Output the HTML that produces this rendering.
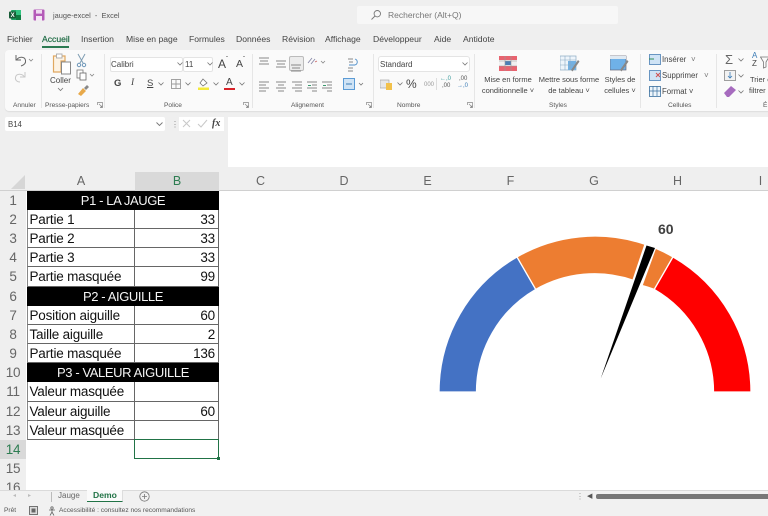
<!DOCTYPE html>
<html lang="fr"><head><meta charset="utf-8"><title>jauge-excel - Excel</title>
<style>
html,body{margin:0;padding:0;width:768px;height:516px;overflow:hidden;background:#fff}
#w{position:relative;width:768px;height:516px;overflow:hidden;font-family:"Liberation Sans",sans-serif;color:#444;filter:blur(.35px)}
#w div,#w span,#w svg{position:absolute}
.t{white-space:nowrap;font-size:8.6px;line-height:11px}
.gl{font-size:6.6px;line-height:9px;color:#555;white-space:nowrap;text-align:center}
.sep{width:1px;background:#e6e6e6;top:54px;height:54px}
.box{background:#fff;border:1px solid #e4e4e4;border-radius:2px;box-sizing:border-box}
.ch{font-size:12.5px;line-height:19px;height:19px;color:#666;text-align:center;top:172px}
.rh{left:0;width:26px;height:19px;text-align:center;font-size:13.5px;line-height:20px;letter-spacing:-.2px;color:#666;background:#efefef}
.c{font-size:13.5px;letter-spacing:-.2px;line-height:19px;height:19.2px;box-sizing:border-box;color:#111;white-space:nowrap}
.a{left:27px;width:108px;padding-left:1.500px;border-bottom:1px solid #666;border-right:1px solid #666;border-left:1px solid #888}
.b{left:135px;width:84px;text-align:right;padding-right:3px;border-bottom:1px solid #666;border-right:1px solid #666}
.h{left:27px;width:192px;background:#000;color:#f4f4f4;text-align:center;font-size:13px;letter-spacing:-.4px}
.l{font-size:7.500px}
</style></head><body><div id="w">

<!-- chrome background -->
<div style="left:0;top:0;width:768px;height:172px;background:#efefef"></div>

<!-- title bar -->
<svg style="left:9px;top:9px" width="12" height="12" viewBox="0 0 12 12"><rect x="2" y="1" width="10" height="10" rx="1" fill="#21a366"/><rect x="7" y="1" width="5" height="5" fill="#33c481"/><rect x="7" y="6" width="5" height="5" fill="#107c41"/><rect x="0" y="2.500" width="7" height="7" rx="1" fill="#185c37"/><text x="1.600" y="8" font-size="6" font-weight="bold" fill="#fff" font-family="Liberation Sans">X</text></svg>
<svg style="left:33px;top:9px" width="12" height="12" viewBox="0 0 12 12"><rect x=".5" y=".5" width="11" height="11" rx="1" fill="#b45ab8"/><rect x="3" y="1" width="6" height="3.600" fill="#efd9f0"/><rect x="3" y="7" width="6" height="4.500" fill="#f4e6f5"/></svg>
<span class="t" style="left:53px;top:10px;font-size:7.400px;color:#555">jauge-excel &nbsp;-&nbsp; Excel</span>
<div style="left:357px;top:6px;width:261px;height:18px;background:#f7f7f7;border-radius:2px"></div>
<svg style="left:370px;top:9px" width="12" height="12" viewBox="0 0 12 12" fill="none" stroke="#777" stroke-width=".9"><circle cx="7.300" cy="4.700" r="3.200"/><path d="M5 7L1.500 10.500"/></svg>
<span class="t" style="left:388px;top:10px;font-size:8.500px;color:#777">Rechercher (Alt+Q)</span>

<!-- menu tabs -->
<span class="t" style="left:7px;top:34px">Fichier</span>
<span class="t" style="left:42px;top:34px;color:#1e6b44;-webkit-text-stroke:.2px #1e6b44">Accueil</span>
<div style="left:42px;top:46px;width:27px;height:2px;background:#2b7a52"></div>
<span class="t" style="left:81px;top:34px">Insertion</span>
<span class="t" style="left:126px;top:34px">Mise en page</span>
<span class="t" style="left:189px;top:34px">Formules</span>
<span class="t" style="left:236px;top:34px">Données</span>
<span class="t" style="left:282px;top:34px">Révision</span>
<span class="t" style="left:325px;top:34px">Affichage</span>
<span class="t" style="left:373px;top:34px">Développeur</span>
<span class="t" style="left:434px;top:34px">Aide</span>
<span class="t" style="left:463px;top:34px">Antidote</span>

<!-- ribbon panel -->
<div style="left:5px;top:50px;width:780px;height:61px;background:#fafafa;border-radius:4px;box-shadow:0 1px 1px #ddd"></div>
<div class="sep" style="left:41px"></div><div class="sep" style="left:104px"></div><div class="sep" style="left:252px"></div><div class="sep" style="left:373px"></div><div class="sep" style="left:474px"></div><div class="sep" style="left:640px"></div><div class="sep" style="left:716px"></div>

<!-- undo / redo -->
<svg style="left:13px;top:52px" width="26" height="32" viewBox="0 0 26 32" fill="none"><path d="M3 3v5h5M3.500 8C6 4 12 4.500 12.500 8.500C13 11 11 13 8 14" stroke="#666" stroke-width="1"/><path d="M16 7l2 2 2-2" stroke="#888" stroke-width=".8"/><path d="M12 20v5h-5M11.500 25C9 21 3 21.500 2.500 25.500C2 28 4 30 7 30" stroke="#c8c8c8" stroke-width="1"/></svg>
<span class="gl" style="left:13px;top:101px">Annuler</span>

<!-- clipboard -->
<svg style="left:50px;top:52px" width="24" height="24" viewBox="0 0 24 24" fill="none"><path d="M3.500 4H15V9H11V20H3.500Z" fill="#fdf3e4" stroke="#e0a860" stroke-width="1.200"/><rect x="6.500" y="2" width="5.500" height="4" fill="#fff" stroke="#aaa" stroke-width=".9"/><rect x="11.500" y="10" width="9" height="12" fill="#fff" stroke="#888"/></svg>
<span class="t" style="left:50px;top:75px;font-size:8px">Coller</span>
<svg style="left:57px;top:87px" width="7" height="5" viewBox="0 0 7 5" fill="none" stroke="#777" stroke-width=".8"><path d="M1 1l2.500 2.500L6 1"/></svg>
<svg style="left:76px;top:53px" width="20" height="46" viewBox="0 0 20 46" fill="none"><path d="M2 1L7 10M9 1L4 10" stroke="#7f9db3" stroke-width="1"/><circle cx="3" cy="12" r="1.700" stroke="#6f98ba"/><circle cx="8" cy="12" r="1.700" stroke="#6f98ba"/><rect x="1" y="17" width="6" height="8" fill="#fff" stroke="#777" stroke-width=".8"/><rect x="4" y="20" width="6" height="7" fill="#fff" stroke="#666" stroke-width=".8"/><path d="M14 21l2 2 2-2" stroke="#888" stroke-width=".8"/><path d="M2 41l5-6 3 3-5 5z" fill="#e8a94a"/><path d="M8 35l3-3 2 2-3 3z" fill="#888"/></svg>
<span class="gl" style="left:45px;top:101px">Presse-papiers</span>
<svg style="left:97px;top:102px" width="6" height="6" viewBox="0 0 6 6" fill="none" stroke="#888" stroke-width=".7"><path d="M.5 3V.5H5.500V5.500H3M2 2L5 5M3.500 5H5V3.500"/></svg>

<!-- font -->
<div class="box" style="left:110px;top:57px;width:73px;height:15px"></div>
<span class="t" style="left:111px;top:59px;font-size:8px">Calibri</span>
<svg style="left:177px;top:62px" width="6" height="4" viewBox="0 0 6 4" fill="none" stroke="#777" stroke-width=".8"><path d="M.5.500L3 3 5.500.500"/></svg>
<div class="box" style="left:183px;top:57px;width:30px;height:15px"></div>
<span class="t" style="left:185px;top:59px;font-size:8px">11</span>
<svg style="left:207px;top:62px" width="6" height="4" viewBox="0 0 6 4" fill="none" stroke="#777" stroke-width=".8"><path d="M.5.500L3 3 5.500.500"/></svg>
<span class="t" style="left:218px;top:57px;font-size:12px;line-height:14px">A</span><span class="t" style="left:226px;top:57px;font-size:6px;line-height:7px">ˆ</span>
<span class="t" style="left:236px;top:58px;font-size:10.500px;line-height:13px">A</span><span class="t" style="left:243px;top:57px;font-size:6px;line-height:7px">ˇ</span>
<span class="t" style="left:114px;top:78px;font-size:9.500px;font-weight:bold">G</span>
<span class="t" style="left:131px;top:78px;font-size:9.500px;font-style:italic;font-family:'Liberation Serif',serif">I</span>
<span class="t" style="left:147px;top:78px;font-size:9.500px;text-decoration:underline">S</span>
<svg style="left:158px;top:82px" width="6" height="4" viewBox="0 0 6 4" fill="none" stroke="#777" stroke-width=".8"><path d="M.5.500L3 3 5.500.500"/></svg>
<svg style="left:171px;top:79px" width="10" height="10" viewBox="0 0 10 10" fill="none" stroke="#999" stroke-width=".9"><rect x=".5" y=".5" width="9" height="9"/><path d="M5 .5v9M.5 5h9"/></svg>
<svg style="left:185px;top:82px" width="6" height="4" viewBox="0 0 6 4" fill="none" stroke="#777" stroke-width=".8"><path d="M.5.500L3 3 5.500.500"/></svg>
<svg style="left:198px;top:78px" width="11" height="12" viewBox="0 0 11 12"><path d="M5 1L9 5 5 8 2 5z" fill="#fff" stroke="#777" stroke-width=".8"/><rect x="0" y="9.500" width="11" height="2.500" fill="#f5ea3a"/></svg>
<svg style="left:213px;top:82px" width="6" height="4" viewBox="0 0 6 4" fill="none" stroke="#777" stroke-width=".8"><path d="M.5.500L3 3 5.500.500"/></svg>
<span class="t" style="left:226px;top:77px;font-size:10px">A</span><div style="left:224px;top:88px;width:11px;height:2px;background:#d8232a"></div>
<svg style="left:239px;top:82px" width="6" height="4" viewBox="0 0 6 4" fill="none" stroke="#777" stroke-width=".8"><path d="M.5.500L3 3 5.500.500"/></svg>
<span class="gl" style="left:164px;top:101px">Police</span>
<svg style="left:243px;top:102px" width="6" height="6" viewBox="0 0 6 6" fill="none" stroke="#888" stroke-width=".7"><path d="M.5 3V.5H5.500V5.500H3M2 2L5 5M3.500 5H5V3.500"/></svg>

<!-- alignment -->
<div style="left:289px;top:56px;width:15px;height:15px;background:#ececec;border:1px solid #bbb;border-radius:2px;box-sizing:border-box"></div>
<svg style="left:258px;top:56px" width="60" height="36" viewBox="0 0 60 36" fill="none" stroke="#888" stroke-width=".9"><path d="M1 2h10M2 5h8M1 8h10"/><path d="M18 5h10M19 8h8M18 11h10"/><path d="M33 9h10M34 12h8M33 15h10"/><path d="M1 26h10M1 29h7M1 32h10M1 35h7"/><path d="M18 26h10M20 29h6M18 32h10M20 35h6"/><path d="M34 26h10M37 29h7M34 32h10M37 35h7"/></svg>
<svg style="left:307px;top:56px" width="36" height="36" viewBox="0 0 36 36" fill="none" stroke-width=".9"><path d="M1 7l4-5M4 8l4-5" stroke="#8a8aa8"/><path d="M8 6l2-1" stroke="#c66"/><path d="M14 5l2 2 2-2" stroke="#888" stroke-width=".8"/><path d="M0 26h10M5 29h5M0 32h10M5 35h5M15 26h10M20 29h5M15 32h10M20 35h5" stroke="#888"/><path d="M1 29.500h3M16 29.500h3" stroke="#3a9b6f"/></svg>
<svg style="left:346px;top:58px" width="14" height="14" viewBox="0 0 14 14" fill="none" stroke-width=".9"><path d="M2 1h5M3 4h4" stroke="#888"/><path d="M9 1c3 1 3 5 0 6H3" stroke="#4f8fc9"/><path d="M2 10h5M2 13h5" stroke="#888"/></svg>
<svg style="left:343px;top:78px" width="24" height="12" viewBox="0 0 24 12"><rect x=".5" y=".5" width="11" height="11" fill="#cfe3f5" stroke="#5b9bd5"/><path d="M3 6h6" stroke="#3a7bb5"/><path d="M16 5l2 2 2-2" fill="none" stroke="#777" stroke-width=".8"/></svg>
<span class="gl" style="left:291px;top:101px">Alignement</span>
<svg style="left:366px;top:102px" width="6" height="6" viewBox="0 0 6 6" fill="none" stroke="#888" stroke-width=".7"><path d="M.5 3V.5H5.500V5.500H3M2 2L5 5M3.500 5H5V3.500"/></svg>

<!-- number -->
<div class="box" style="left:378px;top:56px;width:92px;height:16px;border-radius:3px"></div>
<span class="t" style="left:380px;top:59px;font-size:8px">Standard</span>
<svg style="left:462px;top:62px" width="6" height="4" viewBox="0 0 6 4" fill="none" stroke="#777" stroke-width=".8"><path d="M.5.500L3 3 5.500.500"/></svg>
<svg style="left:380px;top:79px" width="12" height="11" viewBox="0 0 12 11"><rect width="9" height="8" y="1" fill="#e8e8e8" stroke="#999" stroke-width=".6"/><rect x="6" y="4" width="6" height="7" fill="#f2c14b"/></svg>
<svg style="left:397px;top:82px" width="6" height="4" viewBox="0 0 6 4" fill="none" stroke="#777" stroke-width=".8"><path d="M.5.500L3 3 5.500.500"/></svg>
<span class="t" style="left:406px;top:77px;font-size:12px;line-height:14px">%</span>
<span class="t" style="left:424px;top:80px;font-size:6px;color:#999">000</span>
<div style="left:436px;top:78px;width:1px;height:12px;background:#ddd"></div>
<span class="t" style="left:440px;top:76px;font-size:6px;line-height:7px;color:#3a9b9b">←,0</span><span class="t" style="left:442px;top:83px;font-size:6px;line-height:7px;color:#555">,00</span>
<span class="t" style="left:459px;top:76px;font-size:6px;line-height:7px;color:#555">,00</span><span class="t" style="left:457px;top:83px;font-size:6px;line-height:7px;color:#3a7bb5">→,0</span>
<span class="gl" style="left:397px;top:101px">Nombre</span>
<svg style="left:467px;top:102px" width="6" height="6" viewBox="0 0 6 6" fill="none" stroke="#888" stroke-width=".7"><path d="M.5 3V.5H5.500V5.500H3M2 2L5 5M3.500 5H5V3.500"/></svg>

<!-- styles -->
<svg style="left:499px;top:56px" width="18" height="15" viewBox="0 0 18 15"><rect width="18" height="15" fill="#f0f0f0"/><rect x="0" y="0" width="18" height="4" fill="#e8636f"/><rect x="0" y="10" width="18" height="5" fill="#e8636f"/><rect x="6" y="5" width="6" height="4" fill="#4a7fb5"/><path d="M6 0v15M12 0v15M0 5h18M0 10h18" stroke="#999" stroke-width=".6"/></svg>
<span class="t l" style="left:474px;top:74px;width:68px;text-align:center">Mise en forme</span>
<span class="t l" style="left:474px;top:85px;width:68px;text-align:center">conditionnelle ˅</span>
<svg style="left:560px;top:55px" width="20" height="18" viewBox="0 0 20 18"><rect y="1" width="16" height="14" fill="#eef5fb" stroke="#8aa9c2" stroke-width=".7"/><rect x="8" y="6" width="8" height="9" fill="#73b1e3"/><path d="M0 5h16M0 10h16M5 1v14M10 1v14" stroke="#8aa9c2" stroke-width=".6"/><path d="M11 15l7-10 1.500 1.500L12.500 16.500z" fill="#888"/></svg>
<span class="t l" style="left:535px;top:74px;width:68px;text-align:center">Mettre sous forme</span>
<span class="t l" style="left:535px;top:85px;width:68px;text-align:center">de tableau ˅</span>
<svg style="left:610px;top:55px" width="20" height="18" viewBox="0 0 20 18"><rect y="1" width="16" height="14" fill="#6fb1e8" stroke="#667" stroke-width=".7"/><rect y="1" width="16" height="3" fill="#dfe9f2"/><path d="M10 15l7-10 1.500 1.500L11.500 16.500z" fill="#888"/></svg>
<span class="t l" style="left:596px;top:74px;width:48px;text-align:center">Styles de</span>
<span class="t l" style="left:596px;top:85px;width:48px;text-align:center">cellules ˅</span>
<span class="gl" style="left:549px;top:101px">Styles</span>

<!-- cells -->
<svg style="left:649px;top:54px" width="12" height="44" viewBox="0 0 12 44"><rect x=".5" y=".5" width="11" height="10" fill="#cfe3f5" stroke="#4a7fb5" stroke-width=".8"/><path d="M0 5h5" stroke="#2e8b57"/><rect x=".5" y="16.500" width="11" height="10" fill="#cfe3f5" stroke="#4a7fb5" stroke-width=".8"/><path d="M7 19l4 4M11 19l-4 4" stroke="#d05050"/><rect x=".5" y="32.500" width="11" height="10" fill="#eef5fb" stroke="#3a6f9f" stroke-width=".8"/><path d="M4 32v10M8 32v10M0 37h12" stroke="#3a6f9f" stroke-width=".7"/></svg>
<span class="t l" style="left:662px;top:54px;font-size:7.800px">Insérer</span><span class="t" style="left:691px;top:54px;font-size:8px;color:#777">˅</span>
<span class="t l" style="left:662px;top:70px;font-size:7.800px">Supprimer</span><span class="t" style="left:704px;top:70px;font-size:8px;color:#777">˅</span>
<span class="t l" style="left:662px;top:86px;font-size:7.800px">Format ˅</span>
<span class="gl" style="left:668px;top:101px">Cellules</span>

<!-- edit -->
<span class="t" style="left:725px;top:52px;font-size:13px;line-height:15px;color:#666">Σ</span>
<svg style="left:738px;top:58px" width="6" height="4" viewBox="0 0 6 4" fill="none" stroke="#777" stroke-width=".8"><path d="M.5.500L3 3 5.500.500"/></svg>
<svg style="left:724px;top:70px" width="12" height="11" viewBox="0 0 12 11"><rect x=".5" y=".5" width="11" height="10" fill="#f2f2f2" stroke="#888" stroke-width=".8"/><path d="M6 2v6M4 6l2 2 2-2" fill="none" stroke="#3a7bb5" stroke-width=".8"/></svg>
<svg style="left:738px;top:74px" width="6" height="4" viewBox="0 0 6 4" fill="none" stroke="#777" stroke-width=".8"><path d="M.5.500L3 3 5.500.500"/></svg>
<svg style="left:724px;top:86px" width="12" height="11" viewBox="0 0 12 11"><path d="M0 7l7-7 5 4-7 7H3z" fill="#a66bbe"/></svg>
<svg style="left:738px;top:90px" width="6" height="4" viewBox="0 0 6 4" fill="none" stroke="#777" stroke-width=".8"><path d="M.5.500L3 3 5.500.500"/></svg>
<span class="t" style="left:752px;top:52px;font-size:8px;line-height:8px;color:#3a7bb5">A</span><span class="t" style="left:752px;top:60px;font-size:8px;line-height:8px;color:#444">Z</span>
<svg style="left:760px;top:56px" width="10" height="13" viewBox="0 0 10 13" fill="none" stroke="#777" stroke-width=".8"><path d="M.5 1h8.500L6 6v5L3.500 12V6z"/></svg>
<span class="t l" style="left:750px;top:74px">Trier e</span>
<span class="t l" style="left:749px;top:85px">filtrer</span>
<span class="gl" style="left:763px;top:101px">É</span>

<!-- formula bar -->
<div style="left:5px;top:117px;width:160px;height:14px;background:#fff;border-radius:2px"></div>
<span class="t" style="left:8px;top:119px;font-size:7.800px">B14</span>
<svg style="left:156px;top:122px" width="7" height="5" viewBox="0 0 7 5" fill="none" stroke="#777" stroke-width=".9"><path d="M.5.500L3.500 3.500 6.500.500"/></svg>
<span class="t" style="left:171px;top:119px;font-size:8px;color:#888">⋮</span>
<div style="left:179px;top:117px;width:45px;height:14px;background:#fff"></div>
<svg style="left:182px;top:119px" width="26" height="10" viewBox="0 0 26 10" fill="none" stroke="#c8c8c8" stroke-width="1"><path d="M1 1l7 7M8 1L1 8M16 5l3 3 6-7"/></svg>
<span class="t" style="left:212px;top:118px;font-size:10px;font-style:italic;font-family:'Liberation Serif',serif;color:#444"><b>fx</b></span>
<div style="left:228px;top:117px;width:540px;height:50px;background:#fff"></div>

<!-- column headers -->
<div style="left:0;top:172px;width:768px;height:19px;background:#efefef;border-bottom:1px solid #d0d0d0;box-sizing:border-box"></div>
<svg style="left:10px;top:174px" width="16" height="16" viewBox="0 0 16 16"><path d="M15 1V15H1Z" fill="#d6d6d6"/></svg>
<div class="ch" style="left:27px;width:108px">A</div>
<div class="ch" style="left:135px;width:84px;background:#d9d9d9;color:#2e7d52">B</div>
<div class="ch" style="left:219px;width:83px">C</div>
<div class="ch" style="left:302px;width:84px">D</div>
<div class="ch" style="left:386px;width:83px">E</div>
<div class="ch" style="left:469px;width:83px">F</div>
<div class="ch" style="left:552px;width:84px">G</div>
<div class="ch" style="left:636px;width:83px">H</div>
<div class="ch" style="left:719px;width:83px">I</div>

<!-- row headers -->
<div style="left:0;top:191px;width:26px;height:299px;background:#efefef"></div>
<div class="rh" style="top:191px">1</div><div class="rh" style="top:210px">2</div><div class="rh" style="top:229px">3</div><div class="rh" style="top:248px">4</div><div class="rh" style="top:267px">5</div><div class="rh" style="top:287px">6</div><div class="rh" style="top:306px">7</div><div class="rh" style="top:325px">8</div><div class="rh" style="top:344px">9</div><div class="rh" style="top:363px">10</div><div class="rh" style="top:382px">11</div><div class="rh" style="top:402px">12</div><div class="rh" style="top:421px">13</div>
<div class="rh" style="top:440px;background:#d9d9d9;color:#2e7d52">14</div><div class="rh" style="top:459px">15</div><div class="rh" style="top:478px;height:12px;overflow:hidden">16</div>

<!-- cells -->
<div class="c h" style="top:191px">P1 - LA JAUGE</div>
<div class="c a" style="top:210px">Partie 1</div><div class="c b" style="top:210px">33</div>
<div class="c a" style="top:229px">Partie 2</div><div class="c b" style="top:229px">33</div>
<div class="c a" style="top:248px">Partie 3</div><div class="c b" style="top:248px">33</div>
<div class="c a" style="top:267px;height:20px">Partie masquée</div><div class="c b" style="top:267px;height:20px">99</div>
<div class="c h" style="top:287px">P2 - AIGUILLE</div>
<div class="c a" style="top:306px">Position aiguille</div><div class="c b" style="top:306px">60</div>
<div class="c a" style="top:325px">Taille aiguille</div><div class="c b" style="top:325px">2</div>
<div class="c a" style="top:344px">Partie masquée</div><div class="c b" style="top:344px">136</div>
<div class="c h" style="top:363px">P3 - VALEUR AIGUILLE</div>
<div class="c a" style="top:382px;height:20px">Valeur masquée</div><div class="c b" style="top:382px;height:20px"></div>
<div class="c a" style="top:402px">Valeur aiguille</div><div class="c b" style="top:402px">60</div>
<div class="c a" style="top:421px">Valeur masquée</div><div class="c b" style="top:421px"></div>
<div style="left:134px;top:439px;width:85px;height:20px;border:1.500px solid #217346;box-sizing:border-box"></div>
<div style="left:217px;top:457px;width:3px;height:3px;background:#217346"></div>

<!-- gauge -->
<svg style="left:430px;top:210px" width="330" height="190" viewBox="430 210 330 190">
<g stroke="#fff" stroke-width="1.300">
<path d="M439 392A156 156 0 0 1 517 256.900L535.750 289.400A118.500 118.500 0 0 0 476.500 392Z" fill="#4472c4"/>
<path d="M517 256.900A156 156 0 0 1 645 244.300L633 280.200A118.500 118.500 0 0 0 535.750 289.400Z" fill="#ed7d31"/>
<path d="M655.500 248.200A156 156 0 0 1 673 256.900L654.250 289.400A118.500 118.500 0 0 0 642 285.500Z" fill="#ed7d31"/>
<path d="M673 256.900A156 156 0 0 1 751 392H713.500A118.500 118.500 0 0 0 654.250 289.400Z" fill="#ff0000"/>
</g>
<path d="M646.500 245.500L655 248L600.700 378.500Z" fill="#000"/>
</svg>
<span class="t" style="left:658px;top:221px;font-size:14px;line-height:16px;font-weight:bold;color:#404040">60</span>

<!-- sheet tabs -->
<div style="left:0;top:490px;width:768px;height:26px;background:#f1f1f1;border-top:1px solid #dadada;box-sizing:border-box"></div>
<span class="t" style="left:13px;top:491px;font-size:6px;color:#bbb">◂</span>
<span class="t" style="left:28px;top:491px;font-size:6px;color:#bbb">▸</span>
<div style="left:51px;top:492px;width:1px;height:10px;background:#bbb"></div>
<span class="t" style="left:58px;top:490px;font-size:8px;color:#666">Jauge</span>
<div style="left:87px;top:490px;width:36px;height:12px;background:#fafafa;border-bottom:1.500px solid #217346;border-right:1px solid #ddd;box-sizing:border-box"></div>
<span class="t" style="left:93px;top:490px;font-size:8.600px;font-weight:bold;color:#217346">Demo</span>
<svg style="left:139px;top:491px" width="11" height="11" viewBox="0 0 11 11" fill="none" stroke="#777" stroke-width=".8"><circle cx="5.500" cy="5.500" r="4.700"/><path d="M5.500 3v5M3 5.500h5"/></svg>
<span class="t" style="left:576px;top:491px;font-size:8px;color:#999">⋮</span>
<span class="t" style="left:587px;top:491px;font-size:7px;color:#555">◀</span>
<div style="left:596px;top:494px;width:172px;height:5px;background:#777;border-radius:2px 0 0 2px"></div>

<!-- status bar -->
<span class="t" style="left:4px;top:506px;font-size:6.600px;line-height:10px;color:#555">Prêt</span>
<svg style="left:29px;top:506px" width="9" height="9" viewBox="0 0 9 9"><rect x=".5" y=".5" width="8" height="8" fill="#ddd" stroke="#555" stroke-width=".8"/><rect x="2.500" y="2.500" width="4" height="4" fill="#666"/></svg>
<svg style="left:48px;top:506px" width="10" height="10" viewBox="0 0 10 10" fill="none" stroke="#666" stroke-width=".8"><circle cx="4" cy="2" r="1.200"/><path d="M1 4h6M4 4v2M4 6L2 9.500M4 6l2 3.500"/></svg>
<span class="t" style="left:59px;top:506px;font-size:6.600px;line-height:10px;color:#555">Accessibilité : consultez nos recommandations</span>

</div></body></html>
